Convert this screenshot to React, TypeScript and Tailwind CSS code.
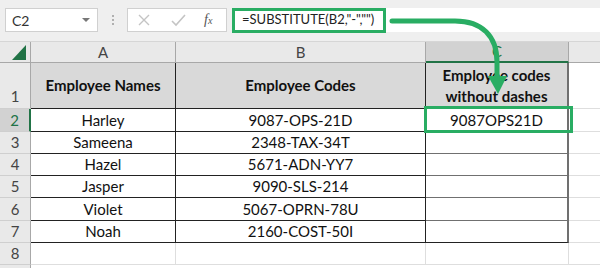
import React from "react";

const ROWS = [
  { n: 2, name: "Harley", code: "9087-OPS-21D", out: "9087OPS21D" },
  { n: 3, name: "Sameena", code: "2348-TAX-34T", out: "" },
  { n: 4, name: "Hazel", code: "5671-ADN-YY7", out: "" },
  { n: 5, name: "Jasper", code: "9090-SLS-214", out: "" },
  { n: 6, name: "Violet", code: "5067-OPRN-78U", out: "" },
  { n: 7, name: "Noah", code: "2160-COST-50I", out: "" },
];

const ROW_H = ["h-[23px]", "h-[22px]", "h-[22px]", "h-[22px]", "h-[23px]", "h-[22px]"];

function Toolbar() {
  return (
    <div className="h-[42px] bg-[#efefef] flex items-start pt-[8px] pl-[5px] border-b border-[#d6d6d6]">
      <div className="w-[93px] h-[24px] bg-white border border-[#d0d0d0] flex items-center justify-between pl-[6px] pr-[7px]">
        <span className="text-[14px] text-[#333]">C2</span>
        <span className="w-0 h-0 border-l-[4px] border-r-[4px] border-t-[4px] border-l-transparent border-r-transparent border-t-[#777]" />
      </div>
      <div className="w-[29px] h-[24px] flex flex-col items-center justify-center gap-[2px]">
        <span className="w-[2px] h-[2px] bg-[#b0b0b0]" />
        <span className="w-[2px] h-[2px] bg-[#b0b0b0]" />
        <span className="w-[2px] h-[2px] bg-[#b0b0b0]" />
      </div>
      <div className="w-[100px] h-[24px] bg-white border border-[#d0d0d0] flex items-center">
        <svg width="76" height="22" viewBox="0 0 76 22">
          <path d="M11 6 L21 16 M21 6 L11 16" stroke="#c4c4c4" strokeWidth="1.4" fill="none" />
          <path d="M44 12 L48 16 L57 6" stroke="#c4c4c4" strokeWidth="1.6" fill="none" />
        </svg>
        <span className="text-[14px] italic text-[#555] leading-none" style={{ fontFamily: '"Liberation Serif", serif' }}>
          f<span className="text-[10px]">x</span>
        </span>
      </div>
      <div className="ml-[5px] flex-1 h-[24px] bg-white flex items-center">
        <div className="w-[154px] h-[25px] border-[3px] border-[#29ad63] flex items-center pl-[7px] text-[13px] text-[#222] whitespace-nowrap">
          =SUBSTITUTE(B2,"-","")
        </div>
      </div>
    </div>
  );
}

function ColumnHeaders() {
  return (
    <div className="flex h-[21px] bg-[#e9e9e9] text-[15px] text-[#444]">
      <div className="w-[31px] border-r border-b border-[#a8a8a8] flex items-end justify-end pr-[4px] pb-[2px]">
        <span className="w-0 h-0 border-l-[14px] border-b-[15px] border-l-transparent border-b-[#217346]" />
      </div>
      <div className="w-[145px] border-r border-b border-[#a8a8a8] flex items-center justify-center">A</div>
      <div className="w-[250px] border-r border-b border-[#a8a8a8] flex items-center justify-center">B</div>
      <div className="w-[143px] bg-[#d2d2d2] border-r border-[#a8a8a8] border-b-2 border-b-[#217346] flex items-center justify-center text-[#217346]">C</div>
      <div className="flex-1 border-b border-[#a8a8a8]" />
    </div>
  );
}

export default function App() {
  return (
    <div
      className="w-[600px] h-[268px] overflow-hidden bg-white relative"
      style={{ fontFamily: "Lato, 'Open Sans', sans-serif" }}
    >
      <Toolbar />
      <ColumnHeaders />

      <div className="flex h-[46px] text-[15px] text-[#111]">
        <div className="w-[31px] bg-[#e9e9e9] border-r border-b border-[#a8a8a8] border-b-[#cfcfcf] flex items-end justify-center pb-[1px] text-[#444]">1</div>
        <div className="w-[145px] bg-[#d9d9d9] border-r border-b border-[#222] flex items-center justify-center font-bold">Employee Names</div>
        <div className="w-[250px] bg-[#d9d9d9] border-r border-b border-[#222] flex items-center justify-center font-bold">Employee Codes</div>
        <div className="w-[143px] bg-[#d9d9d9] border-r-2 border-b border-[#707070] flex flex-col items-center justify-center font-bold leading-[21px]">
          <span>Employee codes</span>
          <span>without dashes</span>
        </div>
        <div className="flex-1 border-b border-[#dedede]" />
      </div>

      {ROWS.map((r, i) => (
        <div key={r.n} className={`flex ${ROW_H[i]} text-[15px] text-[#111]`}>
          <div
            className={`w-[31px] border-b border-b-[#cfcfcf] flex items-center justify-center ${
              r.n === 2
                ? "bg-[#d2d2d2] border-r-2 border-r-[#217346] text-[#217346]"
                : "bg-[#e9e9e9] border-r border-r-[#a8a8a8] text-[#444]"
            }`}
          >
            {r.n}
          </div>
          <div className="w-[145px] border-r border-b border-[#222] flex items-center justify-center">{r.name}</div>
          <div className="w-[250px] border-r border-b border-[#222] flex items-center justify-center">{r.code}</div>
          <div
            className={`w-[143px] border-r-2 border-r-[#707070] border-b flex items-center justify-center ${
              i === ROWS.length - 1 ? "border-b-[#222]" : "border-b-[#707070]"
            }`}
          >
            {r.out}
          </div>
          <div className="flex-1 border-b border-[#dedede]" />
        </div>
      ))}

      <div className="flex h-[22px] text-[15px]">
        <div className="w-[31px] bg-[#e9e9e9] border-r border-b border-r-[#a8a8a8] border-b-[#cfcfcf] flex items-center justify-center text-[#444]">8</div>
        <div className="w-[145px] border-r border-b border-[#dedede]" />
        <div className="w-[250px] border-r border-b border-[#dedede]" />
        <div className="w-[143px] border-r border-b border-[#dedede]" />
        <div className="flex-1 border-b border-[#dedede]" />
      </div>
      <div className="flex h-[22px]">
        <div className="w-[31px] bg-[#e9e9e9] border-r border-[#a8a8a8]" />
      </div>

      {/* selected cell C2 */}
      <div className="absolute left-[424px] top-[106px] w-[149px] h-[27px] border-[3px] border-[#29ad63]" />

      {/* arrow from formula to C column */}
      <svg className="absolute left-0 top-0" width="600" height="268" viewBox="0 0 600 268">
        <path d="M392 21 L455 21 C482 21 497 36 497 62 L497 78" stroke="#29ad63" strokeWidth="5" strokeLinecap="round" fill="none" />
        <polygon points="488,76 507,76 498,94" fill="#29ad63" />
      </svg>
    </div>
  );
}
